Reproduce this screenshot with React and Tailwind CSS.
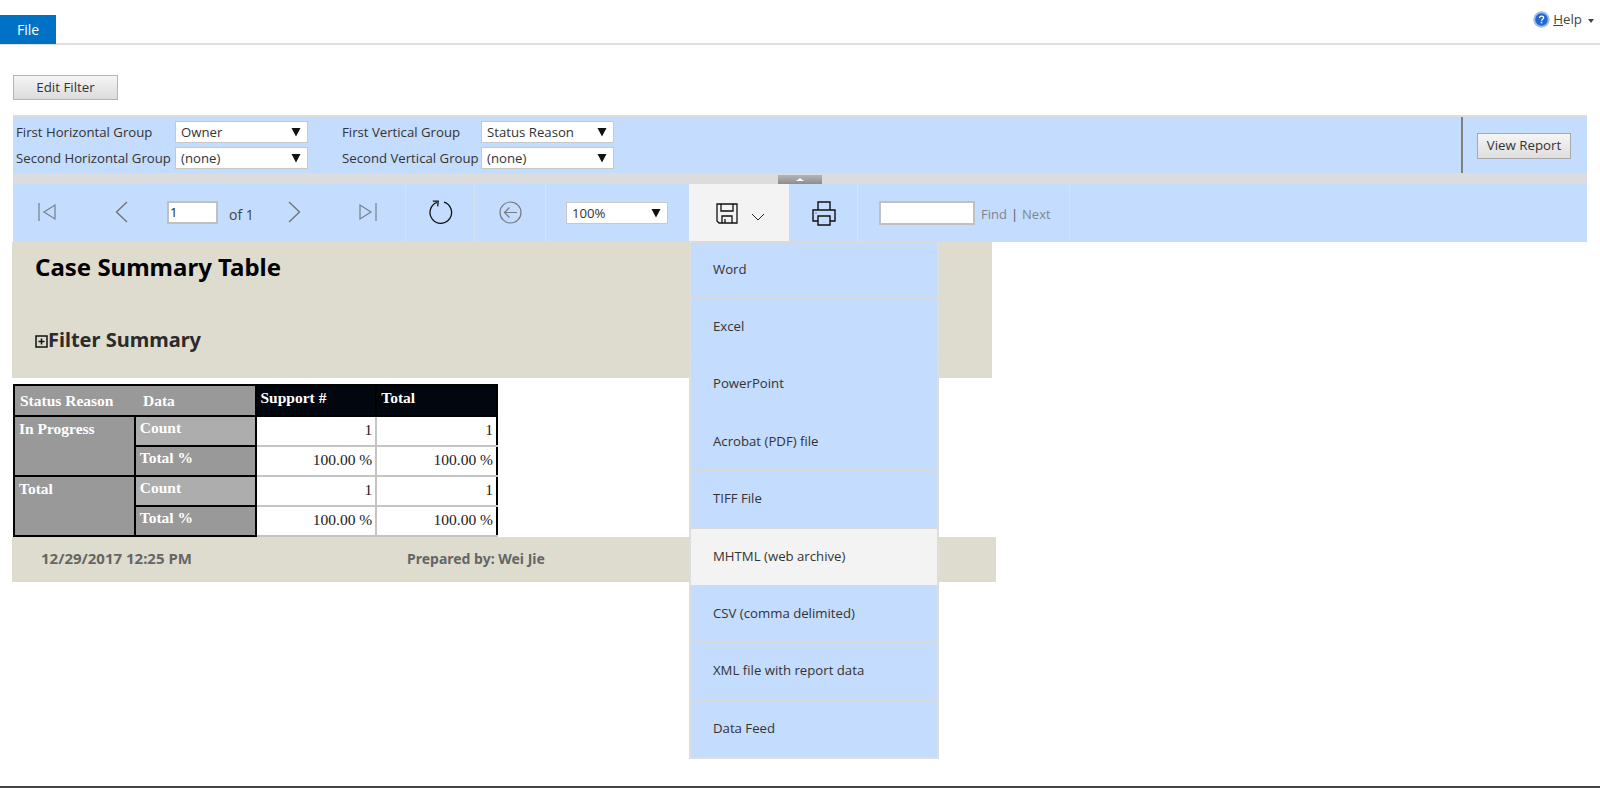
import React from 'react';

const FONT = 'font-["Open_Sans","Noto_Sans",sans-serif]';

const menuItems = [
    'Word',
    'Excel',
    'PowerPoint',
    'Acrobat (PDF) file',
    'TIFF File',
    'MHTML (web archive)',
    'CSV (comma delimited)',
    'XML file with report data',
    'Data Feed',
];

const Arrow = () => (
    <svg width="10" height="10" viewBox="0 0 10 10" className="shrink-0">
        <path d="M0.5 1h9L5 9.5z" fill="#111" />
    </svg>
);

const FakeSelect = ({ value, width = 'w-[133px]', height = 'h-[22px]' }) => (
    <div className={`${width} ${height} flex items-center justify-between bg-white border border-[#c8c8c8] pl-[5px] pr-[6px] text-[13.2px] text-[#333]`}>
        <span className="pt-[1px]">{value}</span>
        <Arrow />
    </div>
);

const Segment = ({ className = '', children }) => (
    <div className={`h-full flex items-center border-r border-[#d6e2f2] ${className}`}>{children}</div>
);

const HelpIcon = () => (
    <svg width="17" height="17" viewBox="0 0 17 17">
        <circle cx="8.5" cy="8.5" r="8.2" fill="#9dbde8" />
        <circle cx="8.5" cy="8.5" r="6.2" fill="#2468cc" />
        <path d="M6.5 7c.1-1.2 1-1.9 2.1-1.9 1.1 0 2 .7 2 1.7 0 1.4-2 1.5-2 3" fill="none" stroke="#fff" strokeWidth="1.3" />
        <rect x="7.8" y="10.8" width="1.5" height="1.5" fill="#fff" />
    </svg>
);

const FirstIcon = () => (
    <svg width="18" height="20" viewBox="0 0 18 20" fill="none" stroke="#7a7f88" strokeWidth="1.2">
        <path d="M1 1v18" />
        <path d="M17 3v14L6 10z" />
    </svg>
);

const LastIcon = () => (
    <svg width="18" height="20" viewBox="0 0 18 20" fill="none" stroke="#7a7f88" strokeWidth="1.2">
        <path d="M17 1v18" />
        <path d="M1 3v14l11-7z" />
    </svg>
);

const PrevIcon = () => (
    <svg width="13" height="22" viewBox="0 0 13 22" fill="none" stroke="#6f747c" strokeWidth="1.4">
        <path d="M12 1L1.5 11 12 21" />
    </svg>
);

const NextIcon = () => (
    <svg width="13" height="22" viewBox="0 0 13 22" fill="none" stroke="#6f747c" strokeWidth="1.4">
        <path d="M1 1l10.5 10L1 21" />
    </svg>
);

const RefreshIcon = () => (
    <svg width="24" height="24" viewBox="0 0 24 24" fill="none" stroke="#111" strokeWidth="1.3">
        <path d="M15 2.2A10.8 10.8 0 1 1 8 2.4" />
        <path d="M3.8 1.2h5.4l-.5 5.2" />
    </svg>
);

const BackIcon = () => (
    <svg width="23" height="23" viewBox="0 0 23 23" fill="none" stroke="#777c84" strokeWidth="1.2">
        <circle cx="11.5" cy="11.5" r="10.5" />
        <path d="M18 11.5H5.5M10.5 6.5l-5 5 5 5" />
    </svg>
);

const SaveIcon = () => (
    <svg width="22" height="21" viewBox="0 0 22 21" fill="none" stroke="#111" strokeWidth="1.3">
        <path d="M1 1h20v19H3l-2-2z" />
        <path d="M5 1v7h12V1" />
        <path d="M6 20v-7h10v7M9 20v-4" />
    </svg>
);

const PrintIcon = () => (
    <svg width="24" height="25" viewBox="0 0 24 25" fill="none" stroke="#111" strokeWidth="1.4">
        <path d="M6 9V1h12v8" />
        <path d="M6 20H1V9h22v11h-5" />
        <path d="M6 15h12v9H6z" />
        <path d="M3.5 12h1" stroke="#3c6ea8" />
    </svg>
);

const ReportTable = () => {
    const head = 'bg-[#999999] text-white font-bold border-2 border-black align-top';
    const num = 'bg-white text-right text-[#222] border-2 border-[#c4c4c4] pr-[3px] pb-[3px] align-middle';
    const serif = 'font-["Liberation_Serif",serif]';

    const Row = ({ label, metric, light, v1, v2 }) => (
        <tr className="h-[30px]">
            {label && (
                <td rowSpan={2} className={`${head} w-[119px] pl-[4px] pt-[3px]`}>{label}</td>
            )}
            <td className={`${head} w-[120px] pl-[4px] pt-[2px] ${light ? 'bg-[#adadad]' : ''}`}>{metric}</td>
            <td className={`${num} w-[122px]`}>{v1}</td>
            <td className={`${num} w-[123px] border-r-black`}>{v2}</td>
        </tr>
    );

    return (
        <table className={`ml-[13px] mt-[6px] w-[485px] table-fixed border-collapse text-[15.5px] leading-[18px] ${serif}`}>
            <tbody>
                <tr className="h-[31px]">
                    <td colSpan={2} className="bg-[#999999] text-white font-bold border-2 border-black pl-[5px] whitespace-nowrap">
                        <span className="inline-block w-[123px]">Status Reason</span>Data
                    </td>
                    <td className="bg-[#02060e] text-white font-bold border-2 border-black pl-[4px] pb-[5px]">Support #</td>
                    <td className="bg-[#02060e] text-white font-bold border-2 border-black pl-[4px] pb-[5px]">Total</td>
                </tr>
                <Row label="In Progress" metric="Count" light v1="1" v2="1" />
                <Row metric="Total %" v1="100.00 %" v2="100.00 %" />
                <Row label="Total" metric="Count" light v1="1" v2="1" />
                <Row metric="Total %" v1="100.00 %" v2="100.00 %" />
            </tbody>
        </table>
    );
};

export default function App() {
    return (
        <div className={`w-[1600px] h-[788px] overflow-hidden bg-white border-b-2 border-[#444] ${FONT}`}>
            {/* Ribbon */}
            <div className="h-[45px] flex justify-between border-b-2 border-[#e0e0e0]">
                <div className="mt-[15px] w-[56px] h-[29px] bg-[#0072c6] text-white text-[14px] flex items-center justify-center">
                    File
                </div>
                <div className="flex items-start pt-[11px] pr-[6px] text-[13.3px] text-[#444] gap-[3px]">
                    <HelpIcon />
                    <span className="-mt-[1px]"><span className="underline">H</span>elp</span>
                    <span className="mt-[8px] ml-[3px] border-x-[3.5px] border-t-[4px] border-x-transparent border-t-[#444]"></span>
                </div>
            </div>

            <button className="block ml-[13px] mt-[30px] w-[105px] h-[25px] bg-gradient-to-b from-[#f5f5f5] to-[#dcdcdc] border border-[#b5b5b5] text-[13.3px] text-[#333]">
                Edit Filter
            </button>

            {/* Filter panel */}
            <div className="ml-[13px] mt-[15px] w-[1574px] h-[58px] bg-[#c4dcfd] border-t-2 border-[#dddddd] flex justify-between text-[13.2px] text-[#333]">
                <div className="grid grid-cols-[159px_133px_173px_133px] grid-rows-[22px_22px] gap-y-[4px] pt-[4px] pl-[3px] items-center whitespace-nowrap">
                    <span className="pt-[2px]">First Horizontal Group</span>
                    <FakeSelect value="Owner" />
                    <span className="ml-[34px] pt-[2px]">First Vertical Group</span>
                    <FakeSelect value="Status Reason" />
                    <span className="pt-[2px]">Second Horizontal Group</span>
                    <FakeSelect value="(none)" />
                    <span className="ml-[34px] pt-[2px]">Second Vertical Group</span>
                    <FakeSelect value="(none)" />
                </div>
                <div className="w-[126px] border-l-2 border-[#808080] flex items-center pl-[14px] pt-[2px]">
                    <button className="w-[94px] h-[26px] bg-gradient-to-b from-[#f5f5f5] to-[#dedede] border border-[#a8a8a8] text-[13.3px] text-[#333]">
                        View Report
                    </button>
                </div>
            </div>

            {/* Collapse strip */}
            <div className="ml-[13px] w-[1574px] h-[11px] bg-[#dcdcdc] flex">
                <div className="ml-[765px] mt-[2px] w-[44px] h-[9px] bg-gradient-to-b from-[#b4b4b4] to-[#8e8e8e] flex items-center justify-center">
                    <span className="border-x-[4px] border-b-[3px] border-x-transparent border-b-white"></span>
                </div>
            </div>

            {/* Toolbar + export menu */}
            <div className="relative">
                <div className="ml-[13px] w-[1574px] h-[58px] bg-[#c4dcfd] flex text-[14px] text-[#444]">
                    <Segment className="w-[393px] pl-[25px] pb-[2px]">
                        <FirstIcon />
                        <span className="ml-[59px]"><PrevIcon /></span>
                        <input readOnly value="1" className="ml-[39px] w-[51px] h-[23px] bg-white border-2 border-[#c0c0c0] pl-[1px] text-[13px] text-[#222] outline-none" />
                        <span className="ml-[11px] mt-[4px] w-[59px]">of 1</span>
                        <NextIcon />
                        <span className="ml-[58px]"><LastIcon /></span>
                    </Segment>
                    <Segment className="w-[69px] pl-[23px] pb-[3px]"><RefreshIcon /></Segment>
                    <Segment className="w-[71px] pl-[24px] pb-[2px]"><BackIcon /></Segment>
                    <Segment className="w-[143px] pl-[20px] border-r-0">
                        <FakeSelect value="100%" width="w-[102px]" />
                    </Segment>
                    <Segment className="w-[100px] bg-[#f3f3f3] border-r-0 pl-[27px] gap-[13px]">
                        <SaveIcon />
                        <svg width="14" height="8" viewBox="0 0 14 8" fill="none" stroke="#222" strokeWidth="1" className="mt-[7px]">
                            <path d="M1 1l6 6 6-6" />
                        </svg>
                    </Segment>
                    <Segment className="w-[69px] pl-[23px]"><PrintIcon /></Segment>
                    <Segment className="w-[212px] pl-[21px] text-[13px]">
                        <div className="w-[96px] h-[24px] bg-white border-2 border-[#c0c0c0]"></div>
                        <span className="ml-[6px] mt-[4px] text-[#7f8790]">Find</span>
                        <span className="ml-[4px] mt-[4px] text-[#555]">|</span>
                        <span className="ml-[4px] mt-[4px] text-[#7f8790]">Next</span>
                    </Segment>
                </div>

                {/* Export menu */}
                <div className="absolute left-[689px] top-[57px] z-10 w-[250px] border-x-2 border-b-2 border-[#dddddd] text-[13.2px] text-[#333]">
                    {menuItems.map((item, i) => (
                        <div
                            key={item}
                            className={`${i === 2 || i === 4 || i === 7 ? 'h-[58px]' : 'h-[57px]'} flex items-center pl-[22px] pb-[1px] ${i === 0 ? 'border-t-2' : 'border-t'} border-[#dadada] ${item.startsWith('MHTML') ? 'bg-[#f3f3f3]' : 'bg-[#c4dcfd]'}`}
                        >
                            {item}
                        </div>
                    ))}
                </div>
            </div>

            {/* Report */}
            <div className="ml-[12px] w-[980px] h-[136px] bg-[#dedccf] font-['Noto_Sans',sans-serif] font-bold pt-[7px] pl-[23px]">
                <div className="text-[24px] leading-[36px] text-black">Case Summary Table</div>
                <div className="mt-[41px] flex items-center text-[20px] leading-[28px] text-[#2b2b2b]">
                    <svg width="13" height="13" viewBox="0 0 13 13" fill="none" stroke="#111" strokeWidth="1.5" className="mt-[3px]">
                        <rect x="1" y="1" width="11" height="11" />
                        <path d="M3.5 6.5h6M6.5 3.5v6" />
                    </svg>
                    Filter Summary
                </div>
            </div>

            <ReportTable />

            <div className="ml-[12px] w-[984px] h-[45px] bg-[#dedccf] flex pt-[10px] font-bold text-[#666] font-['Noto_Sans',sans-serif]">
                <span className="ml-[29px] w-[366px] text-[15px]">12/29/2017 12:25 PM</span>
                <span className="pt-[1px] text-[14px]">Prepared by: Wei Jie</span>
            </div>
        </div>
    );
}
